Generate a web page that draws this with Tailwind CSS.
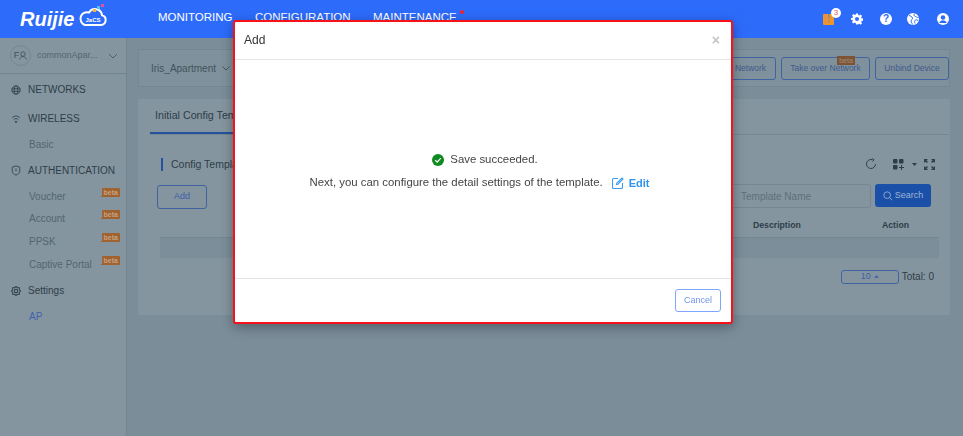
<!doctype html>
<html lang="en">
<head>
<meta charset="utf-8">
<title>Config Template</title>
<script src="https://cdn.jsdelivr.net/npm/@tailwindcss/browser@4"></script>
</head>
<body class="h-[436px] w-[963px] overflow-hidden bg-[#7b8d99] font-['Liberation_Sans',Arial,sans-serif] text-[#2f3d49]">
<!-- top bar -->
<header class="flex h-[38px] items-center bg-[#2d6bfb] text-white">
  <div class="flex w-[158px] items-center pl-[20px]">
    <span class="text-[20px] leading-none font-bold italic">Ruijie</span>
    <svg class="ml-[4px] -mt-[6px]" width="30" height="24" viewBox="0 0 30 24" fill="none">
      <path d="M7 21h16a5 5 0 0 0 1-9.800A7 7 0 0 0 11 8.500 6 6 0 0 0 7 21z" stroke="#fff" stroke-width="2"/>
      <rect x="15" y="5" width="3" height="3" fill="#f5b83d"/><rect x="19" y="2" width="3" height="3" fill="#4fc3f7"/><rect x="23" y="0" width="3" height="3" fill="#e84fa0"/>
      <text x="15" y="18" text-anchor="middle" font-size="6" font-weight="700" fill="#fff">JaCS</text>
    </svg>
  </div>
  <nav class="flex -mt-[2px] text-[11.5px]">
    <span class="w-[97px]">MONITORING</span>
    <span class="w-[118px]">CONFIGURATION</span>
    <span class="relative">MAINTENANCE<span class="absolute -right-[7px] top-[1px] size-[4px] rounded-full bg-[#f5222d]"></span></span>
  </nav>
  <div class="ml-auto flex items-center pr-[14px]">
    <span class="relative flex size-[11px] items-center justify-center rounded-[1px] bg-[#f0922e] text-[10px] leading-none font-bold text-[#8a8f9a]">!
      <span class="absolute -right-[7px] -top-[6px] flex size-[10px] items-center justify-center rounded-full bg-white text-[8px] font-normal text-[#e0556a]">3</span>
    </span>
    <svg class="ml-[17px]" width="12" height="12" viewBox="0 0 24 24" fill="#fff"><path fill-rule="evenodd" d="M10 1h4l.6 3.200 2 .8L19.300 3.200l2.800 2.800-1.800 2.700.8 2 3.200.6v4l-3.200.6-.8 2 1.800 2.700-2.800 2.800-2.700-1.800-2 .8L14 23h-4l-.6-3.200-2-.8-2.700 1.800-2.800-2.800 1.800-2.700-.8-2L0 14v-4l3.200-.6.8-2L2.200 4.700 5 2l2.700 1.800 2-.8zM12 8a4 4 0 1 0 0 8 4 4 0 0 0 0-8z"/></svg>
    <span class="ml-[17px] flex size-[12px] items-center justify-center rounded-full bg-white text-[10px] leading-none font-bold text-[#2d6bfb]">?</span>
    <svg class="ml-[15px]" width="12" height="12" viewBox="0 0 24 24"><circle cx="12" cy="12" r="12" fill="#fff"/><path d="M4 5c3 1 6 2 7 5s-3 3-3 6 2 4 3 7M15 1c-2 3-1 5 2 6s5 3 6 2M22 15c-3-2-5-2-6 0s-1 4 0 6" fill="none" stroke="#2d6bfb" stroke-width="2"/></svg>
    <svg class="ml-[18px]" width="12" height="12" viewBox="0 0 24 24"><circle cx="12" cy="12" r="12" fill="#fff"/><circle cx="12" cy="9" r="4.500" fill="#2d6bfb"/><path d="M4.500 20c1-4 4-5.500 7.500-5.500s6.500 1.500 7.500 5.500z" fill="#2d6bfb"/></svg>
  </div>
</header>

<div class="flex h-[398px]">
  <!-- sidebar -->
  <aside class="w-[127px] shrink-0 border-r border-[#73858f] bg-[#84959f] text-[10px]">
    <div class="flex h-[36px] items-center gap-[6px] border-b border-[#73858f] pl-[10px] text-[#55656f]">
      <span class="flex size-[21px] items-center justify-center rounded-full border border-[#75868f] text-[9px] font-normal text-[#3f4e59]">
        F<svg width="8" height="9" viewBox="0 0 8 9" fill="none" stroke="#3f4e59" stroke-width=".8"><circle cx="4" cy="3" r="2.200"/><path d="M.5 8.500C1 6.500 2.500 5.500 4 5.500s3 1 3.500 3"/></svg>
      </span>
      <span class="text-[9px]">commonApar...</span>
      <svg class="ml-[4px]" width="10" height="6" viewBox="0 0 10 6" fill="none" stroke="#4f5f69"><path d="M1 1l4 4 4-4"/></svg>
    </div>
    <div class="flex flex-col">
      <div class="flex h-[30px] items-center gap-[7px] pl-[11px] pt-[1px]">
        <svg width="10" height="10" viewBox="0 0 12 12" fill="none" stroke="#2f3d49"><circle cx="6" cy="6" r="5"/><ellipse cx="6" cy="6" rx="2.200" ry="5"/><path d="M1 4.500h10M1 7.500h10"/></svg>NETWORKS
      </div>
      <div class="flex h-[29px] items-center gap-[7px] pl-[11px]">
        <svg width="10" height="8" viewBox="0 0 12 10" fill="none" stroke="#2f3d49"><path d="M1 3.500c3-3 7-3 10 0M3 5.800c2-1.800 4-1.800 6 0"/><circle cx="6" cy="8.500" r=".8" fill="#2f3d49"/></svg>WIRELESS
      </div>
      <div class="flex h-[23px] items-center pl-[29px] text-[#55656f]">Basic</div>
      <div class="flex h-[29px] items-center gap-[7px] pl-[11px]">
        <svg width="10" height="11" viewBox="0 0 12 13" fill="none" stroke="#2f3d49"><path d="M6 1l4.500 1.500V7c0 2.500-2 4-4.500 5C3.500 11 1.500 9.500 1.500 7V2.500zM6 4v3.500"/></svg>AUTHENTICATION
      </div>
      <div class="relative flex h-[22px] items-center pl-[29px] text-[#55656f]">Voucher<span class="absolute right-[6px] top-[3px] rounded-[1px] bg-[#a0622f] px-[2px] text-[7px] leading-[9px] font-bold text-[#c4a182]">beta<span class="absolute -left-[1px] bottom-0 h-[1px] w-[2px] bg-[#a0622f]"></span></span></div>
      <div class="relative flex h-[23px] items-center pl-[29px] text-[#55656f]">Account<span class="absolute right-[6px] top-[3px] rounded-[1px] bg-[#a0622f] px-[2px] text-[7px] leading-[9px] font-bold text-[#c4a182]">beta<span class="absolute -left-[1px] bottom-0 h-[1px] w-[2px] bg-[#a0622f]"></span></span></div>
      <div class="relative flex h-[23px] items-center pl-[29px] text-[#55656f]">PPSK<span class="absolute right-[6px] top-[3px] rounded-[1px] bg-[#a0622f] px-[2px] text-[7px] leading-[9px] font-bold text-[#c4a182]">beta<span class="absolute -left-[1px] bottom-0 h-[1px] w-[2px] bg-[#a0622f]"></span></span></div>
      <div class="relative flex h-[23px] items-center pl-[29px] text-[#55656f]">Captive Portal<span class="absolute right-[6px] top-[3px] rounded-[1px] bg-[#a0622f] px-[2px] text-[7px] leading-[9px] font-bold text-[#c4a182]">beta<span class="absolute -left-[1px] bottom-0 h-[1px] w-[2px] bg-[#a0622f]"></span></span></div>
      <div class="flex h-[29px] items-center gap-[7px] pl-[11px]">
        <svg width="10" height="10" viewBox="0 0 24 24" fill="none" stroke="#2f3d49" stroke-width="2.500"><path d="M12 1l3 3h5v5l3 3-3 3v5h-5l-3 3-3-3H4v-5l-3-3 3-3V4h5z"/><circle cx="12" cy="12" r="4"/></svg>Settings
      </div>
      <div class="flex h-[23px] items-center pl-[29px] text-[#3f62ad]">AP</div>
    </div>
  </aside>

  <!-- main -->
  <main class="flex w-[823px] flex-col gap-[12px] pl-[11px] pt-[11px] text-[10px]">
    <div class="flex h-[38px] items-center rounded-[3px] border border-[#75878f] bg-[#7f919c] pl-[12px]">
      <span class="text-[#44535e]">Iris_Apartment</span>
      <svg class="ml-[6px]" width="8" height="5" viewBox="0 0 8 5" fill="none" stroke="#44535e"><path d="M.5.5L4 4 7.500.5"/></svg>
      <div class="ml-auto flex gap-[5px] text-[8.5px] text-[#3f5a8c]">
        <span class="flex h-[23px] w-[51px] items-center justify-center rounded-[3px] border border-[#40649f]">Network</span>
        <span class="relative flex h-[23px] w-[89px] items-center justify-center rounded-[3px] border border-[#40649f]">Take over Network<span class="absolute right-[14px] -top-[2px] w-[18px] bg-[#7c5434] text-center text-[7px] leading-[9px] text-[#a38c76]">beta</span></span>
        <span class="flex h-[23px] w-[74px] items-center justify-center rounded-[3px] border border-[#40649f]">Unbind Device</span>
      </div>
    </div>

    <section class="flex h-[216px] flex-col bg-[#84959f] px-[12px]">
      <div class="-mr-[11px] h-[36px] border-b border-[#75878f]">
        <span class="flex h-[35px] w-[100px] items-center border-b-2 border-[#24529e] pl-[5px] text-[10.7px] whitespace-nowrap">Initial Config Template</span>
      </div>
      <div class="mt-[22px] flex h-[14px] items-center pl-[11px]">
        <span class="h-[13px] border-l-2 border-[#24529e] pl-[8px] text-[10.5px] leading-[13px]">Config Template</span>
        <div class="ml-auto flex items-center pr-[3px]">
          <svg width="12" height="12" viewBox="0 0 12 12" fill="none" stroke="#2f3d49"><path d="M10.500 6A4.500 4.500 0 1 1 7 1.600M7 .5l2 1.300-1.500 1.700"/></svg>
          <svg class="ml-[16px]" width="12" height="11" viewBox="0 0 12 11" fill="#2f3d49"><rect width="4.500" height="4.500" rx="1"/><rect x="6" width="4.500" height="4.500" rx="1"/><rect y="6" width="4.500" height="4.500" rx="1"/><path d="M8 6h1v2h2v1H9v2H8V9H6V8h2z"/></svg>
          <svg class="ml-[7px]" width="5" height="3" viewBox="0 0 5 3" fill="#2f3d49"><path d="M0 0h5L2.500 3z"/></svg>
          <svg class="ml-[7px]" width="11" height="11" viewBox="0 0 11 11" fill="none" stroke="#2f3d49" stroke-width="1.300"><path d="M0.700 3.500V.7h2.800M7.500.7h2.800v2.800M10.300 7.500v2.800H7.500M3.500 10.300H.7V7.500M1 1l2.500 2.500M10 1L7.500 3.500M10 10L7.500 7.500M1 10l2.500-2.500"/></svg>
        </div>
      </div>
      <div class="mt-[14px] flex h-[24px] items-start pl-[7px]">
        <span class="flex h-[24px] w-[50px] items-center justify-center rounded-[3px] border border-[#40649f] text-[9px] text-[#3f5fa8]">Add</span>
        <div class="ml-auto -mt-[1px] flex gap-[4px] pr-[7px]">
          <span class="flex h-[24px] w-[141px] items-center rounded-[3px] border border-[#75878f] pl-[10px] text-[#5f6f7a]">Template Name</span>
          <span class="flex h-[23px] w-[56px] items-center justify-center gap-[2px] rounded-[3px] bg-[#1b50a8] text-[9px] text-[#9db3d3]">
            <svg width="10" height="10" viewBox="0 0 12 12" fill="none" stroke="#9db3d3"><circle cx="5" cy="5" r="4"/><path d="M8 8l3 3"/></svg>Search
          </span>
        </div>
      </div>
      <div class="mt-[6px] ml-[10px] mr-[-1px] flex h-[23px] items-center border-b border-[#75878f] text-[8.7px] font-bold text-[#2f3d49]">
        <span class="ml-[593px] w-[129px]">Description</span><span>Action</span>
      </div>
      <div class="ml-[10px] mr-[-1px] h-[20px] shrink-0 bg-[#7c8e99]"></div>
      <div class="mt-[11px] flex items-center justify-end pr-[4px]">
        <span class="flex h-[14px] w-[58px] items-center justify-center gap-[3px] rounded-[3px] border border-[#40649f] text-[9px] text-[#3f5fa8]">10
          <svg width="5" height="3" viewBox="0 0 6 3" fill="#3f5fa8"><path d="M0 3h6L3 0z"/></svg>
        </span>
        <span class="ml-[3px] text-[#2f3d49]">Total: 0</span>
      </div>
    </section>
  </main>
</div>

<!-- dialog -->
<div class="fixed left-[233px] top-[20px] flex h-[304px] w-[500px] flex-col rounded-[3px] border-2 border-[#f5121a] bg-white shadow-[0_3px_12px_rgba(0,0,0,0.35)]">
  <div class="flex h-[38px] shrink-0 items-center justify-between border-b border-[#e5e5e5] pb-[2px] pl-[9px] pr-[11px] text-[12px] text-[#333]">
    <span>Add</span><span class="text-[14px] leading-none font-bold text-[#c4c4c4]">×</span>
  </div>
  <div class="flex flex-1 flex-col items-center pt-[92px] text-[11.4px] text-[#444]">
    <div class="flex h-[16px] items-center gap-[6px] pl-[4px]">
      <svg width="12" height="12" viewBox="0 0 12 12"><circle cx="6" cy="6" r="6" fill="#0f8a1f"/><path d="M3.200 6.200l2 1.900 3.600-3.900" fill="none" stroke="#fff" stroke-width="1.200"/></svg>
      <span>Save succeeded.</span>
    </div>
    <div class="mt-[6px] flex h-[18px] items-center pr-[7px]">
      <span>Next, you can configure the detail settings of the template.</span>
      <svg class="ml-[9px]" width="12" height="12" viewBox="0 0 12 12" fill="none" stroke="#3d9cf0" stroke-width="1.100"><path d="M6 1.500H1.500a1 1 0 0 0-1 1v8a1 1 0 0 0 1 1h8a1 1 0 0 0 1-1V6M4.500 7.500l.3-1.500L10 1l1 1-5 5.200z"/></svg>
      <span class="ml-[5px] text-[11px] font-bold text-[#2f94ec]">Edit</span>
    </div>
  </div>
  <div class="flex h-[44px] shrink-0 items-center justify-end border-t border-[#e5e5e5] pr-[10px]">
    <span class="flex h-[23px] w-[46px] items-center justify-center rounded-[3px] border border-[#7ea6ff] text-[9px] text-[#6f93e8]">Cancel</span>
  </div>
</div>
</body>
</html>
